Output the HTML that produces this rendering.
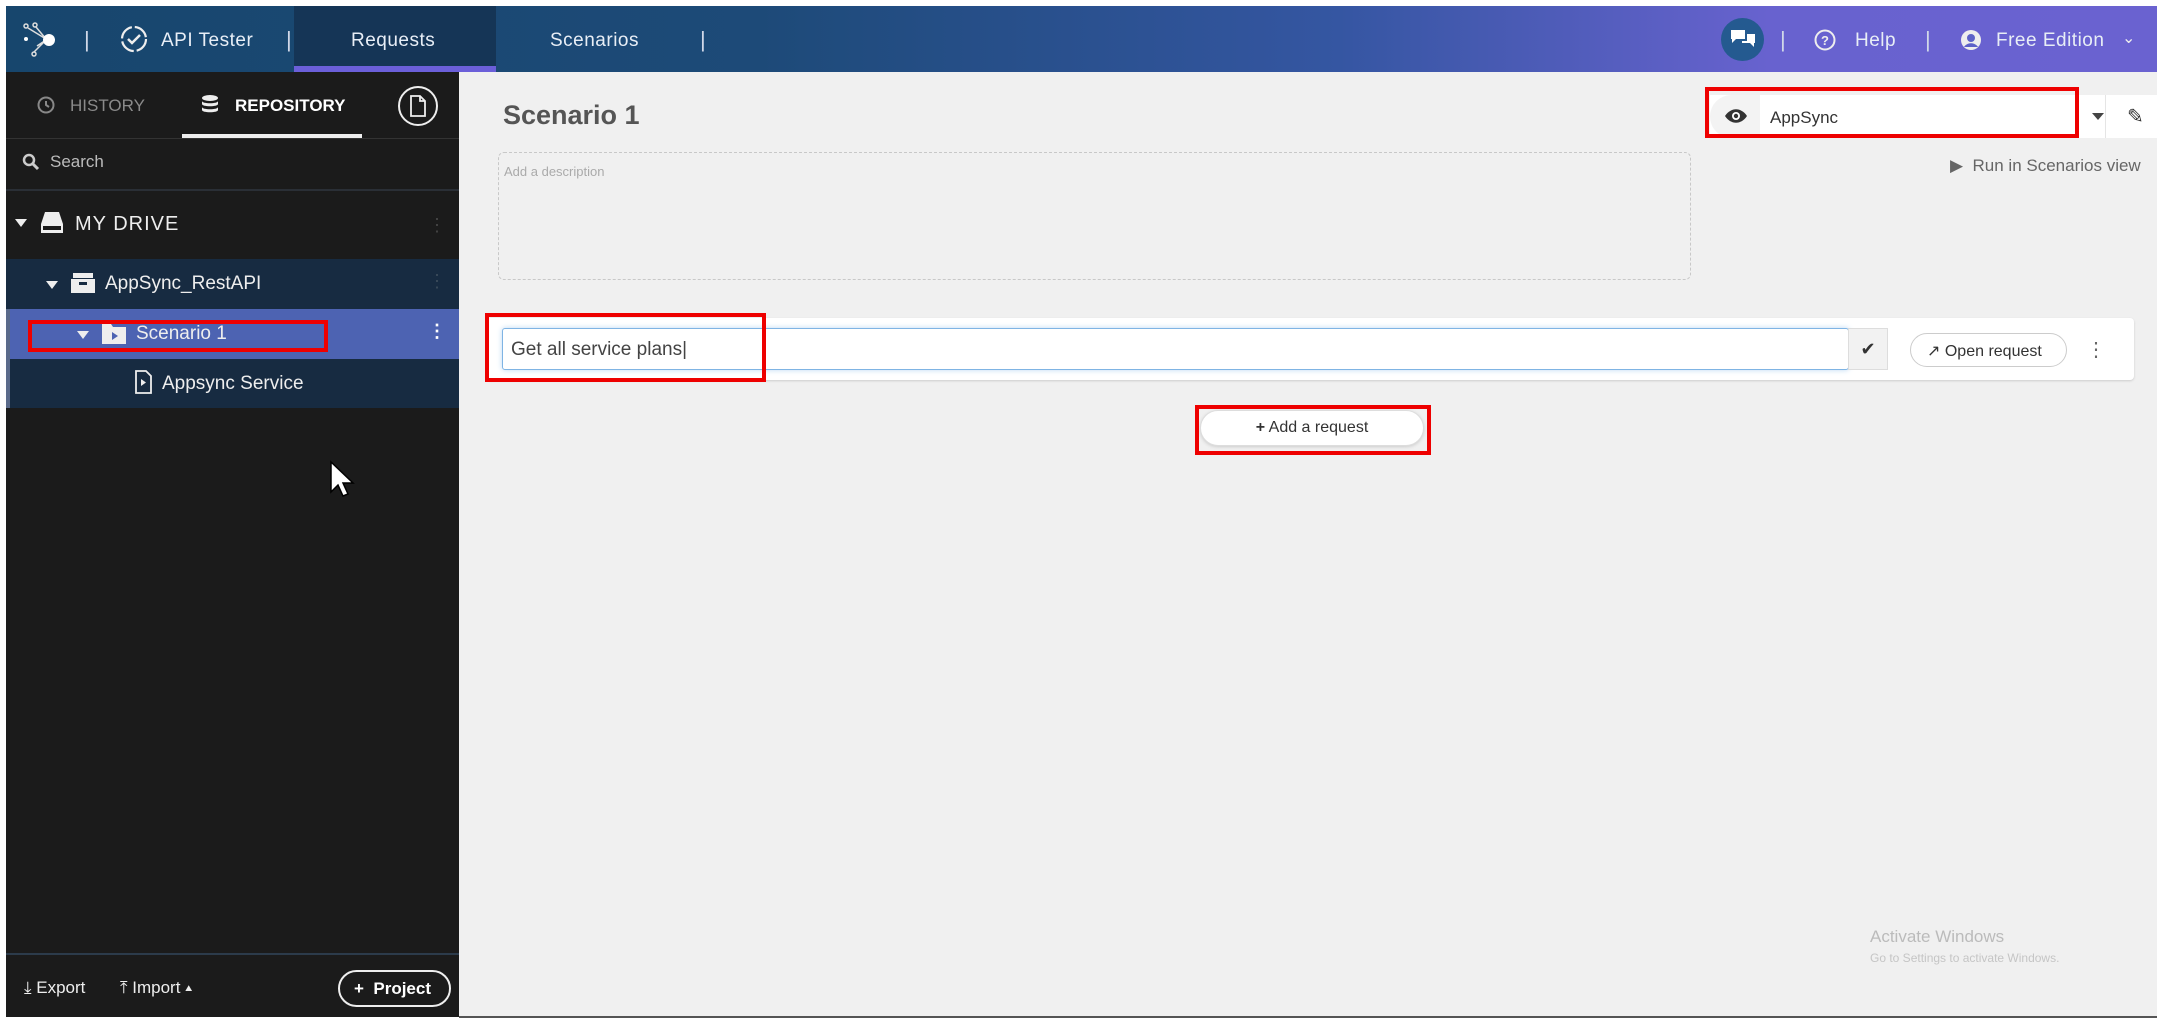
<!DOCTYPE html>
<html><head><meta charset="utf-8"><style>
*{box-sizing:border-box;margin:0;padding:0}
body{width:2167px;height:1022px;background:#fff;position:relative;overflow:hidden;font-family:"Liberation Sans",sans-serif}
.a{position:absolute}
#hdr{left:6px;top:6px;width:2151px;height:66px;background:linear-gradient(90deg,#17466d 0%,#1d4a78 35%,#3556a2 62%,#6862cf 82%,#6a62d0 100%)}
.ht{color:#e8eef6;font-size:19px;letter-spacing:.5px;top:30px}
.sep{color:#d0d8e8;font-size:22px;top:27px}
#side{left:6px;top:72px;width:453px;height:945px;background:#1b1b1b}
#main{left:459px;top:72px;width:1698px;height:945px;background:#f0f0f0}
.row{left:6px;width:453px}
.st{color:#eee;font-size:19px}
.red{border:4px solid #e00;position:absolute}
</style></head><body>
<div id="hdr" class="a"></div>
<div class="a" style="left:294px;top:6px;width:202px;height:66px;background:#153556"></div>
<div class="a" style="left:294px;top:66px;width:202px;height:6px;background:#6b5fd9"></div>
<svg class="a" style="left:20px;top:22px" width="40" height="36" viewBox="0 0 40 36"><g stroke="#ddd" stroke-width="1.5" fill="none"><circle cx="6" cy="4" r="2"/><circle cx="15" cy="3" r="2"/><circle cx="14" cy="32" r="2"/><path d="M8 6L26 17M16 5L26 17M14 30L24 20M17 24L26 18"/></g><circle cx="29" cy="18" r="6" fill="#fff"/><circle cx="6" cy="17" r="2" fill="#fff"/></svg>
<div class="a sep" style="left:84px">|</div>
<svg class="a" style="left:119px;top:24px" width="30" height="30" viewBox="0 0 30 30"><circle cx="15" cy="15" r="12" stroke="#eee" stroke-width="2.2" fill="none" stroke-dasharray="16 3"/><path d="M9 15l4 4 8-8" stroke="#eee" stroke-width="2.5" fill="none"/></svg>
<div class="a ht" style="left:161px">API Tester</div>
<div class="a sep" style="left:286px">|</div>
<div class="a ht" style="left:351px">Requests</div>
<div class="a ht" style="left:550px">Scenarios</div>
<div class="a sep" style="left:700px">|</div>
<div class="a" style="left:1721px;top:18px;width:43px;height:43px;border-radius:50%;background:#245a90"></div>
<svg class="a" style="left:1729px;top:27px" width="28" height="24" viewBox="0 0 28 24"><path d="M2 3h14v9H7l-4 4v-4H2z" fill="#fff"/><path d="M18 7h8v9h-1v4l-4-4h-8v-2h5z" fill="#fff"/></svg>
<div class="a sep" style="left:1780px">|</div>
<svg class="a" style="left:1813px;top:28px" width="24" height="24"><circle cx="12" cy="12" r="9.5" stroke="#eee" stroke-width="2" fill="none"/><text x="12" y="17" font-size="13" font-weight="bold" fill="#eee" text-anchor="middle" font-family="Liberation Sans">?</text></svg>
<div class="a ht" style="left:1855px">Help</div>
<div class="a sep" style="left:1925px">|</div>
<svg class="a" style="left:1959px;top:28px" width="24" height="24"><circle cx="12" cy="12" r="10" fill="#eee"/><circle cx="12" cy="10" r="4" fill="#5d62c8"/><path d="M5 19c3-5 11-5 14 0" fill="#5d62c8"/></svg>
<div class="a ht" style="left:1996px">Free Edition</div>
<div class="a" style="left:2122px;top:28px;color:#eee;font-size:16px">&#8964;</div>

<div id="side" class="a"></div>
<svg class="a" style="left:36px;top:95px" width="20" height="20"><circle cx="10" cy="10" r="7.5" stroke="#888" stroke-width="2" fill="none"/><path d="M10 6v4l3 2" stroke="#888" stroke-width="2" fill="none"/></svg>
<div class="a" style="left:70px;top:96px;color:#8a8a8a;font-size:17px">HISTORY</div>
<svg class="a" style="left:200px;top:94px" width="20" height="20"><ellipse cx="10" cy="4" rx="8" ry="3" fill="#eee"/><path d="M2 7c0 3 16 3 16 0v3c0 3-16 3-16 0zM2 13c0 3 16 3 16 0v3c0 3-16 3-16 0z" fill="#eee"/></svg>
<div class="a" style="left:235px;top:96px;color:#fff;font-size:17px;font-weight:bold">REPOSITORY</div>
<div class="a" style="left:182px;top:134px;width:180px;height:4px;background:#eee"></div>
<div class="a" style="left:6px;top:138px;width:453px;height:1px;background:#333"></div>
<div class="a" style="left:398px;top:86px;width:40px;height:40px;border-radius:50%;border:2px solid #eee"></div>
<svg class="a" style="left:408px;top:94px" width="20" height="24"><path d="M3 2h9l5 5v15H3z M12 2v5h5" stroke="#eee" stroke-width="1.8" fill="none"/></svg>
<svg class="a" style="left:22px;top:153px" width="18" height="18"><circle cx="7" cy="7" r="5" stroke="#ccc" stroke-width="2.5" fill="none"/><path d="M11 11l5 5" stroke="#ccc" stroke-width="3"/></svg>
<div class="a" style="left:50px;top:152px;color:#bbb;font-size:17px">Search</div>
<div class="a" style="left:6px;top:189px;width:453px;height:2px;background:#2a2f36"></div>
<div class="a" style="left:15px;top:219px;border:6px solid transparent;border-top:8px solid #eee"></div>
<svg class="a" style="left:39px;top:210px" width="26" height="26"><path d="M6 2h14l4 12v9H2v-9z" fill="#eee"/><rect x="4" y="16" width="18" height="4" fill="#1b1b1b"/></svg>
<div class="a" style="left:75px;top:213px;color:#eee;font-size:20px;letter-spacing:1px">MY DRIVE</div>
<div class="a" style="left:428px;top:215px;color:#444;font-size:18px">&#8942;</div>
<div class="a row" style="top:259px;height:50px;background:#172b41"></div>
<div class="a" style="left:46px;top:281px;border:6px solid transparent;border-top:8px solid #eee"></div>
<svg class="a" style="left:70px;top:271px" width="26" height="24"><rect x="3" y="2" width="20" height="5" fill="#eee"/><path d="M1 8h24v14H1z" fill="#eee"/><rect x="9" y="11" width="8" height="3" fill="#172b41"/></svg>
<div class="a st" style="left:105px;top:273px">AppSync_RestAPI</div>
<div class="a" style="left:428px;top:271px;color:#3a4a5a;font-size:18px">&#8942;</div>
<div class="a row" style="top:309px;height:50px;background:#4d63b2"></div>
<div class="a" style="left:77px;top:331px;border:6px solid transparent;border-top:8px solid #eee"></div>
<svg class="a" style="left:101px;top:321px" width="26" height="24"><path d="M1 3h9l2 3h13v17H1z" fill="#eee"/><path d="M11 11v8l6-4z" fill="#4d63b2"/></svg>
<div class="a st" style="left:136px;top:323px">Scenario 1</div>
<div class="a" style="left:428px;top:321px;color:#fff;font-size:18px;font-weight:bold">&#8942;</div>
<div class="red" style="left:28px;top:320px;width:300px;height:32px"></div>
<div class="a row" style="top:359px;height:49px;background:#172b41"></div>
<div class="a" style="left:6px;top:309px;width:4px;height:99px;background:#5a6a8a"></div>
<svg class="a" style="left:134px;top:370px" width="20" height="24"><path d="M2 1h10l5 5v17H2z" stroke="#eee" stroke-width="1.8" fill="none"/><path d="M7 9v7l5-3.5z" fill="#eee"/></svg>
<div class="a st" style="left:162px;top:373px">Appsync Service</div>
<svg class="a" style="left:329px;top:460px" width="26" height="38"><path d="M2 2v30l7-7 5 11 5-2-5-11h10z" fill="#fff" stroke="#000" stroke-width="1.5"/></svg>
<div class="a" style="left:6px;top:953px;width:453px;height:2px;background:#2c3b4b"></div>
<div class="a" style="left:24px;top:978px;color:#eee;font-size:17px">&#10515; Export</div>
<div class="a" style="left:120px;top:978px;color:#eee;font-size:17px">&#10514; Import &#9652;</div>
<div class="a" style="left:338px;top:970px;width:113px;height:37px;border:2px solid #eee;border-radius:19px;color:#fff;font-size:17px;font-weight:bold;padding:7px 0 0 14px">+&nbsp; Project</div>

<div id="main" class="a"></div>
<div class="a" style="left:503px;top:100px;color:#555;font-size:27px;font-weight:bold">Scenario 1</div>
<div class="a" style="left:498px;top:152px;width:1193px;height:128px;border:1.5px dashed #c8c8c8;border-radius:6px"></div>
<div class="a" style="left:504px;top:164px;color:#aaa;font-size:13px">Add a description</div>
<div class="a" style="left:1710px;top:95px;width:447px;height:43px;background:#fff"></div>
<div class="a" style="left:1710px;top:95px;width:50px;height:43px;background:#f3f3f3;border-radius:22px 0 0 22px"></div>
<svg class="a" style="left:1724px;top:108px" width="24" height="16"><path d="M1 8c6-9 16-9 22 0c-6 9-16 9-22 0z" fill="#333"/><circle cx="12" cy="8" r="4" fill="#fff"/><circle cx="12" cy="8" r="2.2" fill="#333"/></svg>
<div class="a" style="left:1770px;top:108px;color:#333;font-size:17px">AppSync</div>
<div class="red" style="left:1705px;top:87px;width:374px;height:51px"></div>
<div class="a" style="left:2092px;top:113px;border:6px solid transparent;border-top:7px solid #444"></div>
<div class="a" style="left:2105px;top:95px;width:1px;height:43px;background:#e5e5e5"></div>
<div class="a" style="left:2127px;top:104px;color:#333;font-size:20px">&#9998;</div>
<div class="a" style="left:1950px;top:156px;color:#666;font-size:17px">&#9654;&nbsp; Run in Scenarios view</div>

<div class="a" style="left:487px;top:318px;width:1647px;height:62px;background:#fff;border-radius:4px;box-shadow:0 1px 2px #ccc"></div>
<div class="a" style="left:502px;top:328px;width:1347px;height:42px;border:1.5px solid #7fb4e4;border-radius:3px;background:#fff;box-shadow:0 0 6px #bcd8f2"></div>
<div class="a" style="left:511px;top:339px;color:#444;font-size:19px">Get all service plans|</div>
<div class="a" style="left:1848px;top:328px;width:40px;height:42px;background:#f2f2f2;border:1px solid #ddd;color:#333;font-size:18px;text-align:center;padding-top:10px">&#10004;</div>
<div class="a" style="left:1910px;top:333px;width:157px;height:34px;border:1px solid #ccc;border-radius:17px;background:#fff;color:#333;font-size:16px;padding:7px 0 0 16px">&#8599; Open request</div>
<div class="a" style="left:2086px;top:337px;color:#666;font-size:20px">&#8942;</div>
<div class="red" style="left:485px;top:313px;width:281px;height:69px"></div>
<div class="a" style="left:1200px;top:410px;width:224px;height:36px;border:1px solid #ddd;border-radius:18px;background:#fff;box-shadow:0 1px 3px #ccc;color:#333;font-size:16px;text-align:center;padding-top:8px"><b>+</b> Add a request</div>
<div class="red" style="left:1195px;top:405px;width:236px;height:50px"></div>
<div class="a" style="left:1870px;top:927px;color:#bbb;font-size:17px">Activate Windows</div>
<div class="a" style="left:1870px;top:951px;color:#c5c5c5;font-size:12px">Go to Settings to activate Windows.</div>
<div class="a" style="left:459px;top:1016px;width:1698px;height:2px;background:#555"></div>
</body></html>
